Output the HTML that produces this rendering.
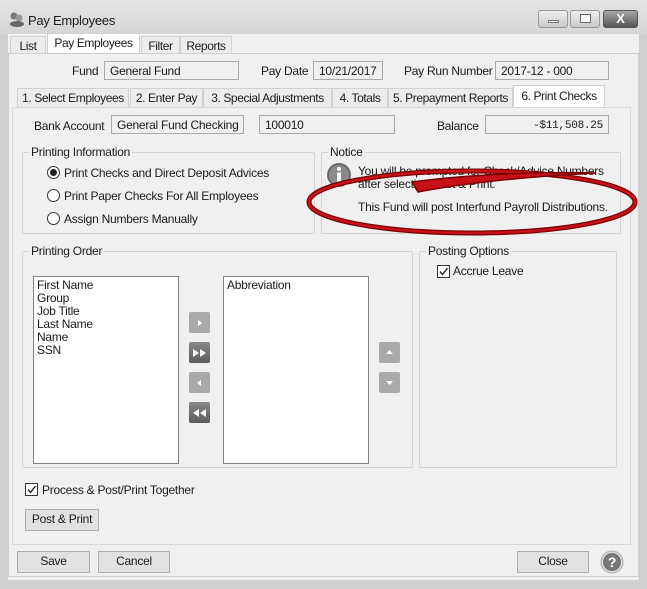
<!DOCTYPE html>
<html><head><style>
*{box-sizing:border-box;margin:0;padding:0}
body{width:647px;height:589px;overflow:hidden;background:#cfcfcf;font-family:"Liberation Sans",sans-serif;font-size:12px;color:#1a1a1a;position:relative;letter-spacing:-0.25px}
.a{position:absolute;white-space:nowrap}
.box{position:absolute;border:1px solid #aaa;background:#f0f0f0;padding:2px 5px;line-height:14px;height:19px;white-space:nowrap}
.grp{position:absolute;border:1px solid #d5d5d5;border-radius:2px}
.gl{position:absolute;top:-8px;left:6px;background:#f0f0f0;padding:0 2px;line-height:14px}
.tab{position:absolute;border:1px solid #d0d0d0;border-bottom:none;background:#ececec;line-height:18px;text-align:center;white-space:nowrap;overflow:visible;letter-spacing:-0.4px}
.sel{background:#fff}
.btn{position:absolute;border:1px solid #adadad;background:#e1e1e1;text-align:center;line-height:19px}
.rad{position:absolute;width:13px;height:13px;border:1px solid #333;border-radius:50%;background:#fff}
.chk{position:absolute;width:13px;height:13px;border:1px solid #333;background:#fff}
.list{position:absolute;border:1px solid #828282;background:#fff;padding:2px 3px;line-height:13px}
.ab{position:absolute;width:21px;height:21px;background:#a9a9a9;border-radius:2px}
.ab.d{background:linear-gradient(#8a8a8a,#5a5a5a)}
</style></head><body>
<div class="a" style="left:0;top:0;width:647px;height:34px;background:linear-gradient(#e4e4e4,#d6d6d6)"></div>
<svg class="a" style="left:8px;top:11px" width="18" height="16"><circle cx="6" cy="5" r="3.5" fill="#777"/><circle cx="11" cy="7" r="3.5" fill="#999"/><ellipse cx="9" cy="13" rx="7" ry="3" fill="#666"/></svg>
<div class="a" style="left:28px;top:13px;font-size:13px">Pay Employees</div>
<div class="a" style="left:538px;top:10px;width:30px;height:18px;border:1px solid #999;border-radius:3px;background:linear-gradient(#eee,#c8c8c8)"><div class="a" style="left:9px;top:9px;width:11px;height:3px;background:#fff;border:1px solid #777"></div></div>
<div class="a" style="left:570px;top:10px;width:30px;height:18px;border:1px solid #999;border-radius:3px;background:linear-gradient(#eee,#c8c8c8)"><div class="a" style="left:9px;top:3px;width:11px;height:9px;border:1px solid #666;background:#fff"></div></div>
<div class="a" style="left:603px;top:10px;width:35px;height:18px;border:1px solid #555;border-radius:3px;background:linear-gradient(#a8a8a8,#555);color:#fff;font-weight:bold;text-align:center;line-height:16px;font-size:13px">X</div>
<div class="a" style="left:8px;top:34px;width:631px;height:546px;background:#f0f0f0"></div>
<div class="tab" style="left:10px;top:36px;height:18px;width:36px">List</div>
<div class="tab sel" style="left:47px;top:33px;height:21px;width:93px;line-height:19px">Pay Employees</div>
<div class="tab" style="left:141px;top:36px;height:18px;width:39px">Filter</div>
<div class="tab" style="left:180px;top:36px;height:18px;width:52px">Reports</div>
<div class="a" style="left:8px;top:53px;width:631px;height:524px;border:1px solid #d0d0d0"></div>
<div class="a" style="left:72px;top:64px">Fund</div>
<div class="box" style="left:104px;top:61px;width:135px">General Fund</div>
<div class="a" style="left:261px;top:64px">Pay Date</div>
<div class="box" style="left:313px;top:61px;width:70px">10/21/2017</div>
<div class="a" style="left:404px;top:64px">Pay Run Number</div>
<div class="box" style="left:495px;top:61px;width:114px">2017-12 - 000</div>
<div class="tab" style="left:17px;top:88px;height:20px;width:112px">1. Select Employees</div>
<div class="tab" style="left:130px;top:88px;height:20px;width:73px">2. Enter Pay</div>
<div class="tab" style="left:203px;top:88px;height:20px;width:129px">3. Special Adjustments</div>
<div class="tab" style="left:332px;top:88px;height:20px;width:56px">4. Totals</div>
<div class="tab" style="left:388px;top:88px;height:20px;width:125px">5. Prepayment Reports</div>
<div class="tab sel" style="left:513px;top:85px;height:23px;width:92px;line-height:21px">6. Print Checks</div>
<div class="a" style="left:12px;top:107px;width:619px;height:438px;border:1px solid #d8d8d8"></div>
<div class="a" style="left:34px;top:119px">Bank Account</div>
<div class="box" style="left:111px;top:115px;width:133px">General Fund Checking</div>
<div class="box" style="left:259px;top:115px;width:136px">100010</div>
<div class="a" style="left:437px;top:119px">Balance</div>
<div class="box" style="left:485px;top:115px;width:124px;text-align:right;font-family:'Liberation Mono',monospace;font-size:11px;padding-top:3px">-$11,508.25</div>

<div class="grp" style="left:22px;top:152px;width:293px;height:82px"><div class="gl">Printing Information</div></div>
<div class="rad" style="left:47px;top:166px"><div class="a" style="left:2px;top:2px;width:7px;height:7px;border-radius:50%;background:#222"></div></div>
<div class="a" style="left:64px;top:166px">Print Checks and Direct Deposit Advices</div>
<div class="rad" style="left:47px;top:189px"></div>
<div class="a" style="left:64px;top:189px">Print Paper Checks For All Employees</div>
<div class="rad" style="left:47px;top:212px"></div>
<div class="a" style="left:64px;top:212px">Assign Numbers Manually</div>

<div class="grp" style="left:321px;top:152px;width:300px;height:82px"><div class="gl">Notice</div></div>
<svg class="a" style="left:326px;top:162px" width="26" height="26"><circle cx="13" cy="13" r="12" fill="#6a6a6a"/><circle cx="13" cy="13" r="10" fill="#8a8a8a"/><circle cx="13" cy="7" r="2" fill="#fff"/><rect x="11" y="10.5" width="4" height="10" fill="#fff"/></svg>
<div class="a" style="left:358px;top:164px">You will be prompted for Check/Advice Numbers</div>
<div class="a" style="left:358px;top:177px">after selecting Post &amp; Print.</div>
<div class="a" style="left:358px;top:200px">This Fund will post Interfund Payroll Distributions.</div>
<svg class="a" style="left:300px;top:160px" width="347" height="90">
<ellipse cx="172" cy="42" rx="163" ry="31" fill="none" stroke="#7a0000" stroke-width="5"/>
<ellipse cx="172" cy="42" rx="163" ry="31" fill="none" stroke="#c8101a" stroke-width="2.5"/>
<path d="M296 13 C250 12 180 13 112 22 L118 32 C170 22 240 16 296 13Z" fill="#c8101a" stroke="#7a0000" stroke-width="1.5"/>
</svg>

<div class="grp" style="left:22px;top:251px;width:391px;height:217px"><div class="gl">Printing Order</div></div>
<div class="list" style="left:33px;top:276px;width:146px;height:188px">First Name<br>Group<br>Job Title<br>Last Name<br>Name<br>SSN</div>
<div class="list" style="left:223px;top:276px;width:146px;height:188px">Abbreviation</div>
<div class="ab" style="left:189px;top:312px"><svg width="21" height="21"><path d="M9 8l4 3-4 3z" fill="#fff"/></svg></div>
<div class="ab d" style="left:189px;top:342px"><svg width="21" height="21"><path d="M4 7l6 4-6 4zM11 7l6 4-6 4z" fill="#fff"/></svg></div>
<div class="ab" style="left:189px;top:372px"><svg width="21" height="21"><path d="M12 8l-4 3 4 3z" fill="#fff"/></svg></div>
<div class="ab d" style="left:189px;top:402px"><svg width="21" height="21"><path d="M10 7l-6 4 6 4zM17 7l-6 4 6 4z" fill="#fff"/></svg></div>
<div class="ab" style="left:379px;top:342px"><svg width="21" height="21"><path d="M7 12l3.5-4 3.5 4z" fill="#fff"/></svg></div>
<div class="ab" style="left:379px;top:372px"><svg width="21" height="21"><path d="M7 9l3.5 4 3.5-4z" fill="#fff"/></svg></div>

<div class="grp" style="left:419px;top:251px;width:198px;height:217px"><div class="gl">Posting Options</div></div>
<div class="chk" style="left:437px;top:265px"><svg class="a" width="11" height="11"><path d="M2 5.5l2.5 3L9.5 2" fill="none" stroke="#222" stroke-width="1.4"/></svg></div>
<div class="a" style="left:453px;top:264px">Accrue Leave</div>

<div class="chk" style="left:25px;top:483px"><svg class="a" width="11" height="11"><path d="M2 5.5l2.5 3L9.5 2" fill="none" stroke="#222" stroke-width="1.4"/></svg></div>
<div class="a" style="left:42px;top:483px">Process &amp; Post/Print Together</div>
<div class="btn" style="left:25px;top:509px;width:74px;height:22px">Post &amp; Print</div>

<div class="btn" style="left:17px;top:551px;width:73px;height:22px">Save</div>
<div class="btn" style="left:98px;top:551px;width:72px;height:22px">Cancel</div>
<div class="btn" style="left:517px;top:551px;width:72px;height:22px">Close</div>
<svg class="a" style="left:600px;top:550px" width="24" height="24"><circle cx="12" cy="12" r="11" fill="#ddd" stroke="#aaa"/><circle cx="12" cy="12" r="9" fill="#777"/><text x="12" y="17" font-family="Liberation Sans" font-weight="bold" font-size="14" fill="#fff" text-anchor="middle">?</text></svg>
</body></html>
